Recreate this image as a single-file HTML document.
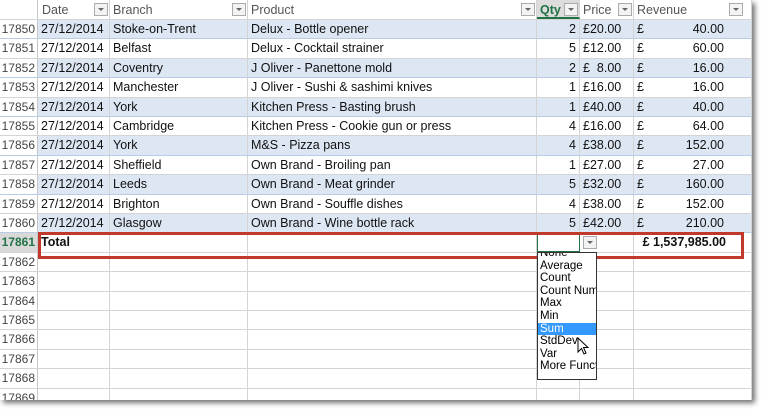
<!DOCTYPE html><html><head><style>
body{margin:0;width:768px;height:415px;background:#fff;overflow:hidden;font-family:"Liberation Sans",sans-serif;}
#win{position:absolute;left:0;top:0;width:752px;height:400px;background:#fff;overflow:hidden;box-shadow:3px 3px 5px rgba(0,0,0,.55);}
.r{position:absolute;left:0;width:752px;height:19.4px;box-sizing:border-box;border-bottom:1px solid #d4d4d4;font-size:12.5px;line-height:19px;color:#111;}
.r.b{background:#dde7f3;border-bottom:1px solid #b8cce4;}
.c{position:absolute;top:0;height:100%;box-sizing:border-box;border-right:1px solid #d4d4d4;padding:0 3px;white-space:nowrap;overflow:hidden;}
.rn{position:absolute;left:0;width:38px;text-align:right;color:#444;font-size:12px;padding-right:2px;box-sizing:border-box;background:#fff;border-right:1px solid #c6c6c6;height:100%}
.dd{position:absolute;top:3px;width:14px;height:13px;border:1px solid #ababab;background:#f3f3f3;box-sizing:border-box}
.dd:after{content:"";position:absolute;left:3px;top:4px;border:3px solid transparent;border-top:3px solid #666;}
.h{color:#555;line-height:21px}
</style></head><body><div id="win">
<div class="r h" style="top:0;height:20px;border-bottom:1px solid #d4d4d4">
<div class="rn" style="background:#fff"></div>
<div class="c" style="left:38px;width:72px;padding-left:4px">Date<div class="dd" style="left:56px"></div></div>
<div class="c" style="left:110px;width:138px">Branch<div class="dd" style="left:122px"></div></div>
<div class="c" style="left:248px;width:289px">Product<div class="dd" style="left:273px"></div></div>
<div class="c" style="left:537px;width:43px;background:#dcdcdc;color:#217346;font-weight:bold;border-bottom:2px solid #217346">Qty<div class="dd" style="left:27px"></div></div>
<div class="c" style="left:580px;width:54px">Price<div class="dd" style="left:38px"></div></div>
<div class="c" style="left:634px;width:118px">Revenue<div class="dd" style="left:95px"></div></div>
</div>
<div id="rows"></div>
<div style="position:absolute;left:38px;top:232px;width:706px;height:27px;border:3px solid #c0392b;box-sizing:border-box"></div>
<div style="position:absolute;left:537px;top:252px;width:60px;height:128px;border:1px solid #333;background:#fff;font-size:11.5px;line-height:12.6px;box-sizing:border-box;overflow:hidden">
<div style="margin-top:-6px;padding-left:2px">None</div><div style="padding-left:2px">Average</div><div style="padding-left:2px">Count</div><div style="padding-left:2px;white-space:nowrap">Count Numbers</div><div style="padding-left:2px">Max</div><div style="padding-left:2px">Min</div><div style="padding-left:2px;background:#3399ff;color:#fff">Sum</div><div style="padding-left:2px">StdDev</div><div style="padding-left:2px">Var</div><div style="padding-left:2px;white-space:nowrap">More Functions</div></div>
<svg style="position:absolute;left:577px;top:337px" width="14" height="20"><path d="M1 1 L1 15 L4.5 11.5 L7 17 L9 16 L6.5 10.5 L11 10.5 Z" fill="#fff" stroke="#000" stroke-width="1"/></svg>
</div>
<script>
var d=[["17850","Stoke-on-Trent","Delux - Bottle opener",2,"20.00","40.00"],["17851","Belfast","Delux - Cocktail strainer",5,"12.00","60.00"],["17852","Coventry","J Oliver - Panettone mold",2,"  8.00","16.00"],["17853","Manchester","J Oliver - Sushi &amp; sashimi knives",1,"16.00","16.00"],["17854","York","Kitchen Press - Basting brush",1,"40.00","40.00"],["17855","Cambridge","Kitchen Press - Cookie gun or press",4,"16.00","64.00"],["17856","York","M&amp;S - Pizza pans",4,"38.00","152.00"],["17857","Sheffield","Own Brand - Broiling pan",1,"27.00","27.00"],["17858","Leeds","Own Brand - Meat grinder",5,"32.00","160.00"],["17859","Brighton","Own Brand - Souffle dishes",4,"38.00","152.00"],["17860","Glasgow","Own Brand - Wine bottle rack",5,"42.00","210.00"]];
var h="",cols=[[38,72],[110,138],[248,289],[537,43],[580,54],[634,118]];
function cells(v){var s="";for(var j=0;j<6;j++)s+='<div class="c" style="left:'+cols[j][0]+'px;width:'+cols[j][1]+'px;'+(j==3?'text-align:right;':'')+'">'+(v[j]||"")+'</div>';return s}
for(var i=0;i<20;i++){var t=20+i*19.4;
if(i<11){var r=d[i];h+='<div class="r'+(i%2==0?' b':'')+'" style="top:'+t+'px"><div class="rn" style="background:#fff">'+r[0]+'</div>'+cells(["27/12/2014",r[1],r[2],r[3],"£"+r[4].replace(/ /g,"&nbsp;"),'£<span style="float:right;padding-right:24px">'+r[5]+'</span>'])+'</div>';}
else if(i==11){h+='<div class="r" style="top:'+t+'px"><div class="rn" style="background:#d9d9d9;color:#217346;font-weight:bold">17861</div>'+cells(["<b>Total</b>","","","","",'<b style="float:right;padding-right:22px">£ 1,537,985.00</b>'])+'<div style="position:absolute;left:537px;top:0;width:43px;height:19px;border:1.5px solid #217346;box-sizing:border-box"></div><div class="dd" style="left:583px"></div></div>';}
else h+='<div class="r" style="top:'+t+'px"><div class="rn">'+(17850+i)+'</div>'+cells(["","","","","",""])+'</div>';}
document.getElementById("rows").innerHTML=h;
</script></body></html>
